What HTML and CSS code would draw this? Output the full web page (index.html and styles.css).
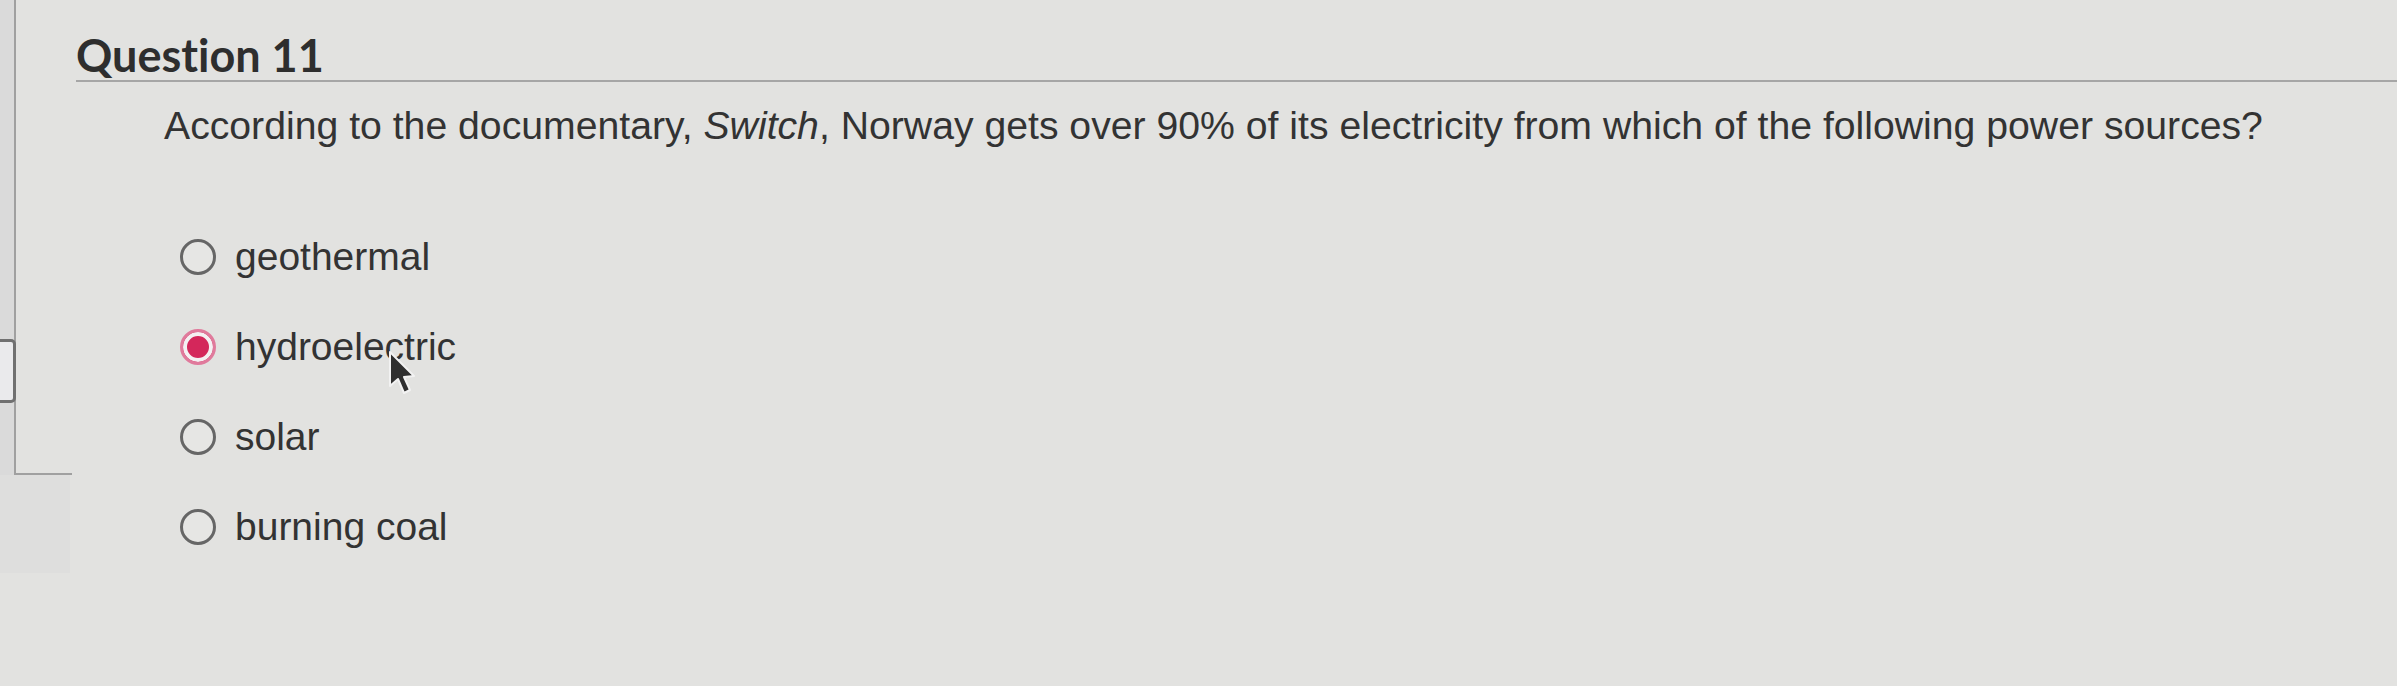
FILE: index.html
```html
<!DOCTYPE html>
<html lang="en">
<head>
<meta charset="utf-8">
<title>Question 11</title>
<link rel="stylesheet" href="styles.css">
</head>
<body>
<div class="page">
  <aside class="side">
    <div class="side-top">
      <div class="strip"></div>
      <div class="rail">
        <div class="rail-tab"></div>
      </div>
    </div>
    <div class="side-foot"></div>
  </aside>
  <main class="question">
    <h2 class="q-title">Question 11</h2>
    <p class="q-text">According to the documentary, <em>Switch</em>, Norway gets over 90% of its electricity from which of the following power sources?</p>
    <ul class="answers">
      <li class="answer"><span class="radio"></span><span class="label">geothermal</span></li>
      <li class="answer"><span class="radio checked"></span><span class="label">hydroelectric</span></li>
      <li class="answer"><span class="radio"></span><span class="label">solar</span></li>
      <li class="answer"><span class="radio"></span><span class="label">burning coal</span></li>
    </ul>
  </main>
  <svg class="cursor" width="30" height="46" viewBox="0 0 30 46" aria-hidden="true">
    <path d="M3 2 L3 36 L11 29 L17 43 L23 40 L17 27 L27 26 Z" fill="#2f2f2f" stroke="#f2f2f2" stroke-width="2" stroke-linejoin="round"/>
  </svg>
</div>
</body>
</html>
```
FILE: styles.css
```css
html, body {
  margin: 0;
  padding: 0;
}
body {
  background: #e2e2e0;
  width: 2397px;
  height: 686px;
  overflow: hidden;
}
.page {
  display: flex;
  position: relative;
  height: 686px;
}
.side {
  flex: none;
  width: 72px;
  display: flex;
  flex-direction: column;
}
.side-top {
  display: flex;
  height: 475px;
}
.strip {
  width: 14px;
  background: #dadada;
}
.rail {
  flex: 1;
  border-left: 2px solid #a0a0a0;
  border-bottom: 2px solid #a0a0a0;
  position: relative;
}
.rail-tab {
  position: absolute;
  left: -16px;
  top: 339px;
  width: 13px;
  height: 58px;
  background: #eaeaec;
  border: 3px solid #707070;
  border-left: none;
  border-radius: 0 5px 5px 0;
}
.side-foot {
  width: 70px;
  height: 98px;
  background: #dededd;
}
.question {
  flex: 1;
  margin-left: 4px;
  color: #333;
}
.q-title {
  margin: 0;
  padding-top: 32px;
  padding-bottom: 2px;
  font-family: Lato, "Open Sans", sans-serif;
  font-weight: 700;
  font-size: 45px;
  line-height: 46px;
  font-variant-ligatures: none;
  color: #2e2e2e;
  border-bottom: 2px solid #a6a6a6;
}
.q-text {
  margin: 21px 0 0 88px;
  font-family: "Liberation Sans", Arial, sans-serif;
  font-size: 39.2px;
  line-height: 46px;
  color: #333;
}
.q-text em {
  font-style: italic;
}
.answers {
  list-style: none;
  margin: 63px 0 0 0;
  padding: 0 0 0 104px;
}
.answer {
  display: flex;
  align-items: center;
  gap: 19px;
  height: 90px;
  font-family: "Liberation Sans", Arial, sans-serif;
  font-size: 39px;
  color: #333;
}
.radio {
  flex: none;
  width: 30px;
  height: 30px;
  border: 3px solid #666;
  border-radius: 50%;
  background: #e6e6e4;
}
.radio.checked {
  border: 3px solid #e07a9c;
  background: #d4275b;
  box-shadow: inset 0 0 0 4px #f4f0f2;
}
.cursor {
  position: absolute;
  left: 387px;
  top: 350px;
}
```
